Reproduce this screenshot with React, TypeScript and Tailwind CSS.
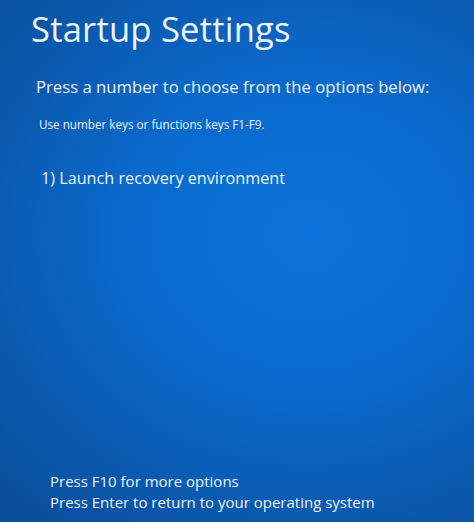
export default function App() {
  return (
    <div
      className="flex h-[522px] w-[474px] flex-col overflow-hidden bg-[#0a62c0] bg-[radial-gradient(ellipse_90%_70%_at_65%_45%,#0b74dc_0%,#0a68ca_45%,#0b58ac_80%,#0a4e9c_100%)] text-[#eef4fb]"
      style={{ fontFamily: '"Open Sans", "Noto Sans", sans-serif' }}
    >
      <div className="pl-[31px] pt-[3px]">
        <h1 className="text-[34.6px] leading-[52px] font-normal tracking-[0.2px]">Startup Settings</h1>
      </div>
      <div className="pl-[36px] pt-[20px]">
        <p className="text-[16.7px] leading-[24px]">Press a number to choose from the options below:</p>
      </div>
      <div className="pl-[39px] pt-[17px]">
        <p className="text-[11.7px] leading-[16px]">Use number keys or functions keys F1-F9.</p>
      </div>
      <div className="pl-[41px] pt-[35px]">
        <p className="text-[16.2px] leading-[22px]">1) Launch recovery environment</p>
      </div>
      <div className="mt-auto flex flex-col gap-[2px] pb-[10px] pl-[50px]">
        <p className="text-[15px] leading-[19px]">Press F10 for more options</p>
        <p className="text-[15px] leading-[19px]">Press Enter to return to your operating system</p>
      </div>
    </div>
  );
}
